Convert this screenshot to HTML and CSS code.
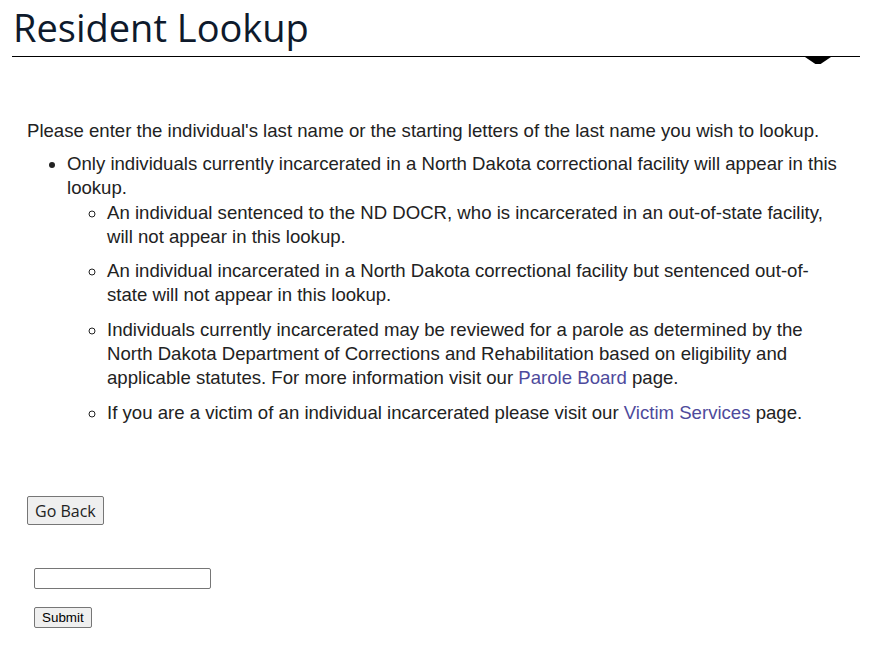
FILE: index.html
```html
<!DOCTYPE html>
<html>
<head>
<meta charset="utf-8">
<link rel="stylesheet" href="styles.css">
</head>
<body>
<header class="page-header">
  <h1 class="title">Resident Lookup</h1>
  <div class="rule"><span class="notch"></span></div>
</header>
<main class="content">
  <p class="intro">Please enter the individual's last name or the starting letters of the last name you wish to lookup.</p>
  <ul class="outer">
    <li>Only individuals currently incarcerated in a North Dakota correctional facility will appear in this lookup.
      <ul class="inner">
        <li>An individual sentenced to the ND DOCR, who is incarcerated in an out-of-state facility, will not appear in this lookup.</li>
        <li>An individual incarcerated in a North Dakota correctional facility but sentenced out-of-state will not appear in this lookup.</li>
        <li>Individuals currently incarcerated may be reviewed for a parole as determined by the North Dakota Department of Corrections and Rehabilitation based on eligibility and applicable statutes. For more information visit our <a href="#">Parole Board</a> page.</li>
        <li>If you are a victim of an individual incarcerated please visit our <a href="#">Victim Services</a> page.</li>
      </ul>
    </li>
  </ul>
  <button class="back" type="button">Go Back</button>
  <form class="search">
    <input class="name" type="text">
    <button class="submit" type="button">Submit</button>
  </form>
</main>
</body>
</html>
```
FILE: styles.css
```css
html, body {
  margin: 0;
  padding: 0;
  background: #fff;
}
body {
  font-family: "Liberation Sans", Arial, sans-serif;
  color: #222;
}
.page-header {
  padding: 0 17px 0 12px;
}
.title {
  margin: 0;
  padding: 2px 0 0 1px;
  font-family: "Open Sans", sans-serif;
  font-weight: 400;
  font-size: 38px;
  line-height: 50px;
  color: #0e1a2c;
}
.rule {
  position: relative;
  border-top: 1px solid #000;
  margin-top: 4px;
}
.notch {
  position: absolute;
  top: 0;
  left: 793px;
  width: 26px;
  height: 7px;
  background: #000;
  clip-path: polygon(0 0, 100% 0, 60% 100%, 40% 100%);
}
.content {
  padding: 62px 34px 0 27px;
}
.intro {
  margin: 0 0 9px 0;
  font-size: 18.6px;
  line-height: 24px;
}
.outer {
  margin: 0;
  padding-left: 40px;
  font-size: 18.6px;
  line-height: 24px;
  list-style: disc;
}
.inner {
  margin: 1px 0 0 0;
  padding-left: 40px;
  list-style: circle;
}
.inner li {
  margin-bottom: 11px;
}
.inner li:first-child {
  margin-bottom: 10px;
}
a {
  color: #4e4a9c;
  text-decoration: none;
}
.back {
  display: block;
  margin-top: 71px;
  font-family: "Open Sans", sans-serif;
  font-size: 16px;
  color: #222;
  background: #efefef;
  border: 1px solid #767676;
  border-radius: 2px;
  padding: 0 7px;
  height: 29px;
}
.search {
  margin-top: 43px;
  padding-left: 7px;
}
.name {
  display: block;
  box-sizing: border-box;
  width: 177px;
  height: 21px;
  border: 1px solid #767676;
  border-radius: 2px;
  padding: 1px 2px;
  font-size: 13px;
}
.submit {
  display: block;
  margin-top: 18px;
  box-sizing: border-box;
  height: 21px;
  padding: 0 7px;
  font-family: "Liberation Sans", Arial, sans-serif;
  font-size: 13.4px;
  color: #000;
  background: #efefef;
  border: 1px solid #767676;
  border-radius: 2px;
}
```
